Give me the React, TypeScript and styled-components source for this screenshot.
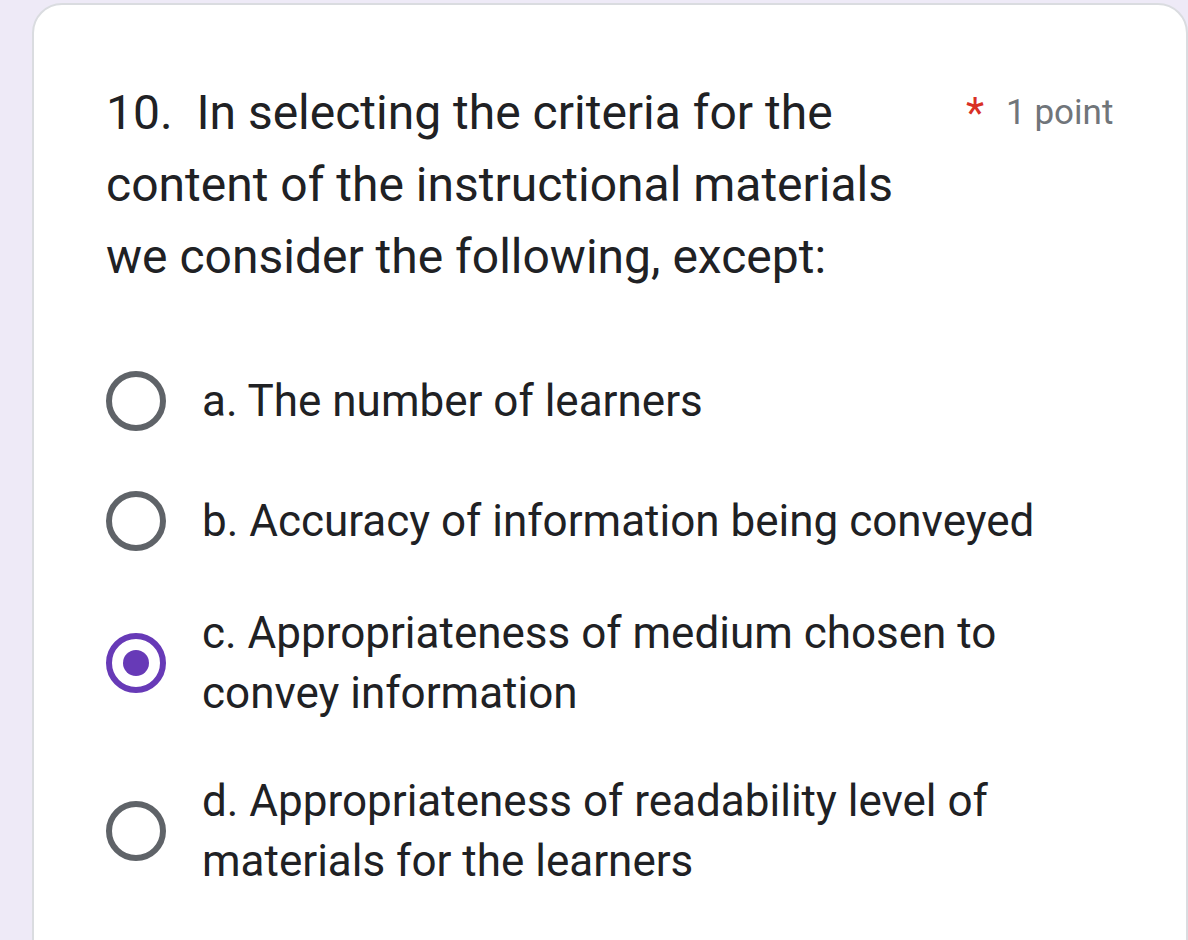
import React from "react";
import styled, { createGlobalStyle } from "styled-components";

const Global = createGlobalStyle`
  html, body { margin: 0; padding: 0; overflow: hidden; }
  body { background: #eeeaf7; font-family: Roboto, "Noto Sans", Arial, sans-serif; }
`;

const Page = styled.div`
  width: 1188px;
  height: 940px;
  padding: 3px 0 0 32px;
  box-sizing: border-box;
  overflow: hidden;
`;

const Card = styled.div`
  background: #fff;
  border: 2px solid #dadce0;
  border-radius: 30px;
  min-height: 1000px;
  box-sizing: border-box;
  padding: 72px 40px 0 72px;
`;

const Header = styled.div`
  display: flex;
  align-items: flex-start;
`;

const Title = styled.div`
  width: 830px;
  font-size: 48px;
  line-height: 72px;
  color: #202124;
`;

const Required = styled.span`
  color: #d93025;
  font-size: 42px;
  line-height: 72px;
  margin-left: 30px;
  margin-right: 22px;
`;

const Points = styled.span`
  color: #70757a;
  font-size: 35px;
  line-height: 72px;
`;

const Options = styled.div`
  display: flex;
  flex-direction: column;
  margin-top: 78px;
`;

const Row = styled.div<{ $space: number }>`
  display: flex;
  align-items: center;
  gap: 36px;
  margin-top: ${(p) => p.$space}px;
`;

const Radio = styled.span<{ $checked?: boolean }>`
  flex: none;
  width: 60px;
  height: 60px;
  box-sizing: border-box;
  border-radius: 50%;
  border: 6px solid ${(p) => (p.$checked ? "#673ab7" : "#5f6368")};
  display: flex;
  align-items: center;
  justify-content: center;
  &::after {
    content: "";
    display: ${(p) => (p.$checked ? "block" : "none")};
    width: 26px;
    height: 26px;
    border-radius: 50%;
    background: #673ab7;
  }
`;

const Label = styled.div`
  font-size: 44px;
  line-height: 60px;
  color: #202124;
  width: 880px;
`;

const options = [
  { text: "a. The number of learners", space: 0 },
  { text: "b. Accuracy of information being conveyed", space: 60 },
  { text: "c. Appropriateness of medium chosen to convey information", checked: true, space: 52 },
  { text: "d. Appropriateness of readability level of materials for the learners", space: 48 },
];

export default function App() {
  return (
    <>
      <Global />
      <Page>
        <Card>
          <Header>
            <Title>10.&nbsp; In selecting the criteria for the content of the instructional materials we consider the following, except:</Title>
            <Required>*</Required>
            <Points>1 point</Points>
          </Header>
          <Options>
            {options.map((o) => (
              <Row key={o.text} $space={o.space}>
                <Radio $checked={o.checked} />
                <Label>{o.text}</Label>
              </Row>
            ))}
          </Options>
        </Card>
      </Page>
    </>
  );
}
